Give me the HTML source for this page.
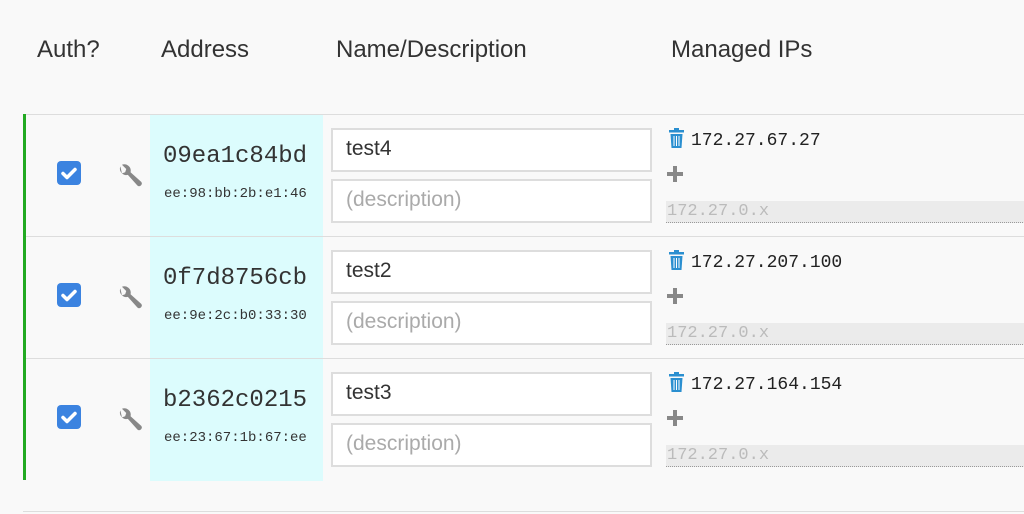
<!DOCTYPE html>
<html><head><style>
body{margin:0;width:1024px;height:514px;background:#f9f9f9;font-family:"Liberation Sans",sans-serif;position:relative;overflow:hidden;color:#333}
.a{position:absolute}
.h{top:36px;font-size:24px;color:#333}
.row{position:absolute;left:23px;width:1001px;height:122px;border-top:1px solid #ddd}
.cy{position:absolute;left:127px;top:0;width:173px;height:122px;background:#dcfcfd}
.cb{position:absolute;left:34px;top:46px;width:24px;height:24px;background:#3b83e0;border-radius:4px}
.adr{position:absolute;left:140px;top:28px;font-family:"Liberation Mono",monospace;font-size:24px;color:#333}
.mac{position:absolute;left:141px;top:71px;font-family:"Liberation Mono",monospace;font-size:14px;color:#333}
.in{position:absolute;left:308px;width:321px;height:44px;background:#fff;border:2px solid #ddd;font-size:21px;line-height:38px;padding-left:13px;box-sizing:border-box}
.ip{position:absolute;left:668px;top:16px;font-family:"Liberation Mono",monospace;font-size:18px;color:#222}
.ph{position:absolute;left:643px;top:86px;width:358px;height:21px;background:#ebebeb;border-bottom:1px dotted #999;font-family:"Liberation Mono",monospace;font-size:17px;color:#bbb;line-height:22px;padding-left:1px}
.pl{position:absolute;left:643px;top:50px}
.tr{position:absolute;left:645px;top:13px}
.wr{position:absolute;left:93px;top:46px}
</style></head><body>
<div class="a h" style="left:37px">Auth?</div>
<div class="a h" style="left:161px">Address</div>
<div class="a h" style="left:336px">Name/Description</div>
<div class="a h" style="left:671px">Managed IPs</div>
<div class="a" style="left:23px;top:114px;width:3px;height:366px;background:#22aa22;z-index:2"></div>

<div class="row" style="top:114px">
<div class="cy"></div>
<div class="cb"><svg width="24" height="24"><path d="M6 12.5l4 4 8-8" stroke="#fff" stroke-width="3.5" fill="none" stroke-linecap="round" stroke-linejoin="round"/></svg></div>
<svg class="wr" width="28" height="30" viewBox="0 0 26 28"><path d="M4 5a6 6 0 0 0 7 8l9 10a2.5 2.5 0 0 0 3.5-3.5l-10-9a6 6 0 0 0-8-7l4 4-1 3-3 1z" fill="#888"/></svg>
<div class="adr">09ea1c84bd</div><div class="mac">ee:98:bb:2b:e1:46</div>
<div class="in" style="top:13px">test4</div>
<div class="in" style="top:64px;color:#aaa">(description)</div>
<svg class="tr" width="17" height="20" viewBox="0 0 17 20"><rect x="1" y="2" width="15" height="2.5" fill="#2a8fd0"/><rect x="6" y="0" width="5" height="3" fill="#2a8fd0"/><path d="M2.5 6h12l-1 14h-10z" fill="#2a8fd0"/><path d="M6 8v10M8.5 8v10M11 8v10" stroke="#fff" stroke-width="1"/></svg>
<div class="ip">172.27.67.27</div>
<svg class="pl" width="18" height="18"><path d="M9 1v16M1 9h16" stroke="#888" stroke-width="4"/></svg>
<div class="ph">172.27.0.x</div>
</div>

<div class="row" style="top:236px">
<div class="cy"></div>
<div class="cb"><svg width="24" height="24"><path d="M6 12.5l4 4 8-8" stroke="#fff" stroke-width="3.5" fill="none" stroke-linecap="round" stroke-linejoin="round"/></svg></div>
<svg class="wr" width="28" height="30" viewBox="0 0 26 28"><path d="M4 5a6 6 0 0 0 7 8l9 10a2.5 2.5 0 0 0 3.5-3.5l-10-9a6 6 0 0 0-8-7l4 4-1 3-3 1z" fill="#888"/></svg>
<div class="adr">0f7d8756cb</div><div class="mac">ee:9e:2c:b0:33:30</div>
<div class="in" style="top:13px">test2</div>
<div class="in" style="top:64px;color:#aaa">(description)</div>
<svg class="tr" width="17" height="20" viewBox="0 0 17 20"><rect x="1" y="2" width="15" height="2.5" fill="#2a8fd0"/><rect x="6" y="0" width="5" height="3" fill="#2a8fd0"/><path d="M2.5 6h12l-1 14h-10z" fill="#2a8fd0"/><path d="M6 8v10M8.5 8v10M11 8v10" stroke="#fff" stroke-width="1"/></svg>
<div class="ip">172.27.207.100</div>
<svg class="pl" width="18" height="18"><path d="M9 1v16M1 9h16" stroke="#888" stroke-width="4"/></svg>
<div class="ph">172.27.0.x</div>
</div>

<div class="row" style="top:358px">
<div class="cy"></div>
<div class="cb"><svg width="24" height="24"><path d="M6 12.5l4 4 8-8" stroke="#fff" stroke-width="3.5" fill="none" stroke-linecap="round" stroke-linejoin="round"/></svg></div>
<svg class="wr" width="28" height="30" viewBox="0 0 26 28"><path d="M4 5a6 6 0 0 0 7 8l9 10a2.5 2.5 0 0 0 3.5-3.5l-10-9a6 6 0 0 0-8-7l4 4-1 3-3 1z" fill="#888"/></svg>
<div class="adr">b2362c0215</div><div class="mac">ee:23:67:1b:67:ee</div>
<div class="in" style="top:13px">test3</div>
<div class="in" style="top:64px;color:#aaa">(description)</div>
<svg class="tr" width="17" height="20" viewBox="0 0 17 20"><rect x="1" y="2" width="15" height="2.5" fill="#2a8fd0"/><rect x="6" y="0" width="5" height="3" fill="#2a8fd0"/><path d="M2.5 6h12l-1 14h-10z" fill="#2a8fd0"/><path d="M6 8v10M8.5 8v10M11 8v10" stroke="#fff" stroke-width="1"/></svg>
<div class="ip">172.27.164.154</div>
<svg class="pl" width="18" height="18"><path d="M9 1v16M1 9h16" stroke="#888" stroke-width="4"/></svg>
<div class="ph">172.27.0.x</div>
</div>
<div class="a" style="left:23px;top:511px;width:1001px;height:1px;background:#ddd"></div>
</body></html>
